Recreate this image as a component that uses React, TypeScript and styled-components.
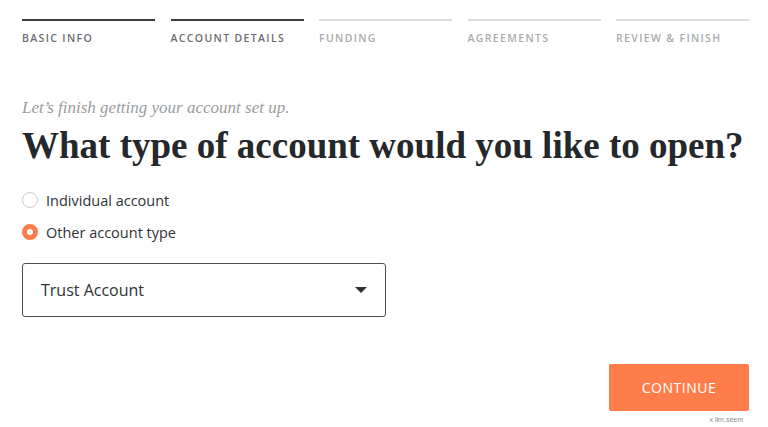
import React from "react";
import styled, { createGlobalStyle } from "styled-components";

const Global = createGlobalStyle`
  html, body { margin: 0; padding: 0; background: #fff; }
  body { font-family: "Lato", "Noto Sans", sans-serif; }
  * { box-sizing: border-box; }
`;

const Page = styled.div`
  width: 768px;
  height: 427px;
  padding: 19px 19px 0 22px;
  display: flex;
  flex-direction: column;
`;

const Steps = styled.div`
  display: grid;
  grid-template-columns: repeat(5, 133px);
  column-gap: 15.5px;
`;

const Step = styled.div<{ $state: "done" | "todo" }>`
  border-top: 2px solid ${(p) => (p.$state === "done" ? "#3b3d40" : "#dedede")};
  padding-top: 10px;
  font-family: "Open Sans", sans-serif;
  font-size: 10.5px;
  font-weight: 600;
  letter-spacing: 1.35px;
  color: ${(p) => (p.$state === "done" ? "#6b6d70" : "#a9abad")};
  white-space: nowrap;
`;

const Lead = styled.p`
  margin: 53px 0 0;
  font-family: "Liberation Serif", serif;
  font-style: italic;
  font-size: 17px;
  color: #9a9c9e;
`;

const Heading = styled.h1`
  margin: 6px 0 0;
  font-family: "Liberation Serif", serif;
  font-weight: 700;
  font-size: 37px;
  line-height: 44px;
  color: #25282b;
  white-space: nowrap;
`;

const Options = styled.div`
  margin-top: 22px;
  display: flex;
  flex-direction: column;
  gap: 12px;
`;

const Option = styled.label`
  display: flex;
  align-items: center;
  gap: 8px;
  font-family: "Open Sans", sans-serif;
  font-size: 14.5px;
  color: #2f3235;
  height: 20px;
`;

const Radio = styled.span<{ $checked?: boolean }>`
  width: 16px;
  height: 16px;
  border-radius: 50%;
  border: ${(p) => (p.$checked ? "5px solid #ff7a4a" : "1px solid #c9cbcd")};
  background: #fff;
  flex: none;
`;

const Select = styled.div`
  margin-top: 21px;
  width: 364px;
  height: 54px;
  border: 1px solid #4b4e52;
  border-radius: 3px;
  display: flex;
  align-items: center;
  justify-content: space-between;
  padding: 0 18px 0 18px;
  font-family: "Open Sans", sans-serif;
  font-size: 16px;
  color: #2f3235;
`;

const Caret = styled.span`
  width: 0;
  height: 0;
  border-left: 6px solid transparent;
  border-right: 6px solid transparent;
  border-top: 6px solid #2f3235;
`;

const Footer = styled.div`
  margin-top: 47px;
  display: flex;
  flex-direction: column;
  align-items: flex-end;
`;

const Continue = styled.button`
  width: 140px;
  height: 47px;
  border: none;
  border-radius: 2px;
  background: #ff7d4b;
  color: #fff;
  font-family: "Open Sans", sans-serif;
  font-size: 14px;
  letter-spacing: 0.5px;
  cursor: pointer;
`;

const Mark = styled.span`
  margin-top: 5px;
  margin-right: 6px;
  font-family: "Liberation Sans", sans-serif;
  font-size: 7px;
  color: #8a8a8a;
`;

export default function App() {
  const steps: [string, "done" | "todo"][] = [
    ["BASIC INFO", "done"],
    ["ACCOUNT DETAILS", "done"],
    ["FUNDING", "todo"],
    ["AGREEMENTS", "todo"],
    ["REVIEW & FINISH", "todo"],
  ];
  return (
    <>
      <Global />
      <Page>
        <Steps>
          {steps.map(([s, st]) => (
            <Step key={s} $state={st}>{s}</Step>
          ))}
        </Steps>
        <Lead>Let’s finish getting your account set up.</Lead>
        <Heading>What type of account would you like to open?</Heading>
        <Options>
          <Option><Radio />Individual account</Option>
          <Option><Radio $checked />Other account type</Option>
        </Options>
        <Select>
          Trust Account
          <Caret />
        </Select>
        <Footer>
          <Continue>CONTINUE</Continue>
          <Mark>x lim.seem</Mark>
        </Footer>
      </Page>
    </>
  );
}
